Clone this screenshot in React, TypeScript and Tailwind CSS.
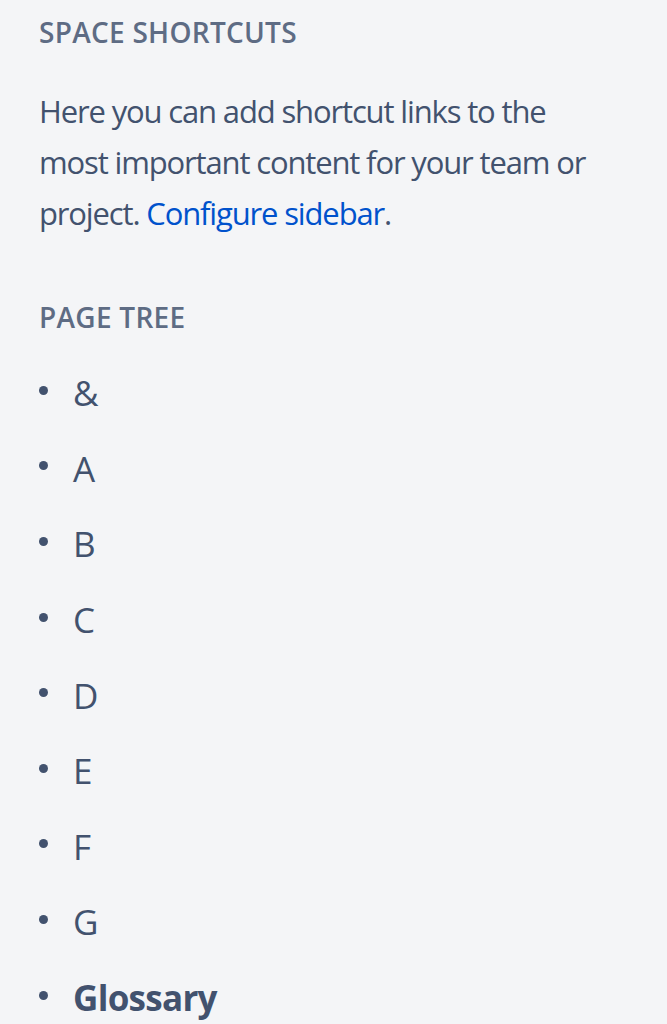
import React from "react";

const items = ["&", "A", "B", "C", "D", "E", "F", "G"];

export default function App() {
  return (
    <div
      className="min-h-[1024px] w-full bg-[#f4f5f7] pl-[39px] pr-4"
      style={{ fontFamily: '"Open Sans", "Noto Sans", sans-serif' }}
    >
      <div className="pt-[12px] text-[28px] leading-[40px] font-semibold tracking-[0.01em] text-[#5e6c84]">
        SPACE SHORTCUTS
      </div>
      <p className="mt-[34px] text-[31px] leading-[51px] tracking-[-0.037em] text-[#42526e]">
        Here you can add shortcut links to the
        <br />
        most important content for your team or
        <br />
        project. <a className="text-[#0052cc]">Configure sidebar</a>.
      </p>
      <div className="mt-[58px] text-[28px] leading-[40px] font-semibold tracking-[0.01em] text-[#5e6c84]">
        PAGE TREE
      </div>
      <ul className="mt-[18.6px]">
        {items.map((t) => (
          <li key={t} className="flex items-center h-[75.6px] text-[35px] text-[#42526e]">
            <span className="w-[9px] h-[9px] rounded-full bg-[#42526e] ml-[0px] mr-[25px] mt-[-6px]" />
            <span>{t}</span>
          </li>
        ))}
        <li className="flex items-center h-[75.6px] text-[35px] font-bold tracking-[-0.02em] text-[#42526e]">
          <span className="w-[9px] h-[9px] rounded-full bg-[#42526e] ml-[0px] mr-[25px] mt-[-6px]" />
          <span>Glossary</span>
        </li>
      </ul>
    </div>
  );
}
